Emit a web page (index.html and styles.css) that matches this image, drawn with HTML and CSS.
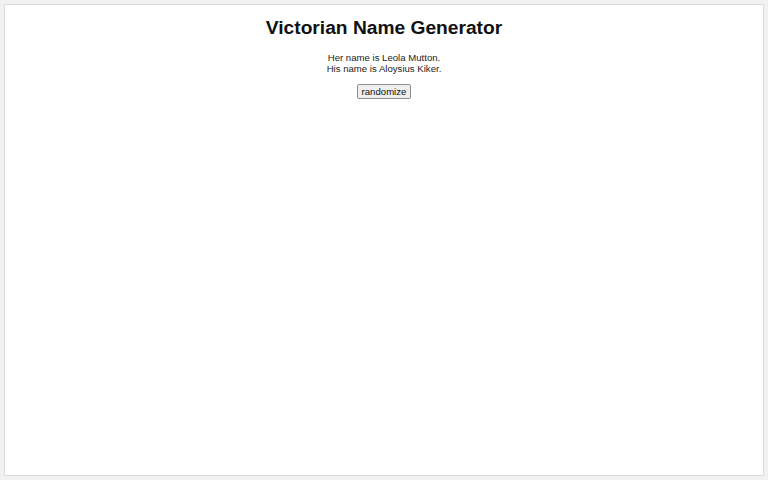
FILE: index.html
```html
<!DOCTYPE html>
<html lang="en">
<head>
    <meta charset="UTF-8">
    <title>Victorian Name Generator</title>
    <link rel="stylesheet" href="styles.css">
</head>
<body>
    <div class="page">
        <h1>Victorian Name Generator</h1>
        <div class="names">
            <div>Her name is Leola Mutton.</div>
            <div>His name is Aloysius Kiker.</div>
        </div>
        <button class="randomize">randomize</button>
    </div>
</body>
</html>
```

FILE: styles.css
```css
body {
    margin: 0;
    padding: 4px;
    height: 100vh;
    box-sizing: border-box;
    background: #f1f1f1;
    font-family: "Liberation Sans", Arial, sans-serif;
}

.page {
    height: 100%;
    box-sizing: border-box;
    background: #fff;
    border: 1px solid #dcdcdc;
    display: flex;
    flex-direction: column;
    align-items: center;
    padding-top: 11px;
}

h1 {
    margin: 0;
    font-size: 19.2px;
    line-height: 24px;
    color: #111;
}

.names {
    margin-top: 12px;
    font-size: 9.6px;
    line-height: 11px;
    text-align: center;
    color: #222;
}

.randomize {
    margin-top: 10px;
    font-family: "Liberation Sans", Arial, sans-serif;
    font-size: 9.6px;
    padding: 1px 4px;
    background: #efefef;
    border: 1px solid #8f8f8f;
    border-radius: 2px;
    color: #111;
}
```
